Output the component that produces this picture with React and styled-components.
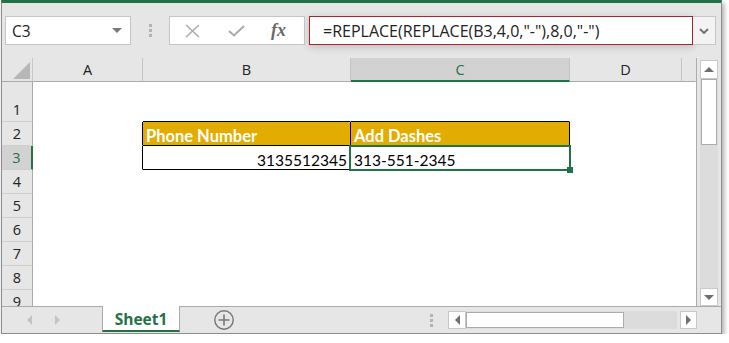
import React from 'react'
import styled, { createGlobalStyle, css } from 'styled-components'

const UI = `"Open Sans", "Noto Sans", sans-serif`
const CELL = `Lato, "Open Sans", sans-serif`
const GREEN = '#217346'

const Global = createGlobalStyle`
  body { margin: 0; background: #fff; }
  * { box-sizing: border-box; }
`

const Window = styled.div`
  width: 721px;
  height: 334px;
  margin-left: 1px;
  border: 1px solid #8d8d8d;
  border-top: 3px solid ${GREEN};
  box-shadow: 2px 3px 5px rgba(0, 0, 0, 0.35);
  background: #e6e6e6;
  display: flex;
  flex-direction: column;
  overflow: hidden;
`

/* formula bar */
const Toolbar = styled.div`
  height: 55px;
  flex: none;
  display: flex;
  align-items: flex-start;
  padding: 13px 0 0 3px;
  font-family: ${UI};
`
const NameBox = styled.div`
  width: 126px;
  height: 29px;
  background: #fff;
  border: 1px solid #c6c6c6;
  display: flex;
  align-items: center;
  justify-content: space-between;
  padding: 0 8px 0 6px;
  font-size: 15.5px;
  color: #222;
`
const Grip = styled.div`
  width: 3px;
  margin: 8px 17px 0 18px;
  display: flex;
  flex-direction: column;
  gap: 2px;
  span { display: block; width: 3px; height: 3px; background: #b3b3b3; }
`
const FxButtons = styled.div`
  width: 136px;
  height: 29px;
  background: #fff;
  border: 1px solid #c6c6c6;
  display: flex;
  align-items: center;
  padding-left: 15px;
  gap: 28px;
`
const Fx = styled.span`
  font-family: "Liberation Serif", serif;
  font-style: italic;
  font-weight: bold;
  font-size: 18px;
  color: #6a6a6a;
  margin-left: -2px;
`
const FormulaInput = styled.div`
  width: 384px;
  height: 29px;
  margin-left: 4px;
  background: #fff;
  border: 1px solid #a4262c;
  box-shadow: 0 2px 8px rgba(0, 0, 0, 0.18);
  display: flex;
  align-items: center;
  padding-left: 13px;
  font-size: 16px;
  color: #222;
`
const Expand = styled.div`
  width: 23px;
  height: 29px;
  background: #f3f3f3;
  border: 1px solid #c6c6c6;
  border-left: none;
  display: flex;
  align-items: center;
  justify-content: center;
`

/* sheet */
const SheetArea = styled.div`
  height: 248px;
  flex: none;
  display: flex;
`
const Grid = styled.div`
  width: 695px;
  background: #fff;
  border-right: 1px solid #ababab;
  display: flex;
  flex-direction: column;
  overflow: hidden;
`
const Row = styled.div`
  display: flex;
  flex: none;
  height: ${p => p.$h}px;
`
const HeadCell = styled.div`
  width: ${p => p.$w}px;
  flex: ${p => (p.$w ? 'none' : '1')};
  height: 24px;
  background: #e6e6e6;
  border-right: 1px solid ${p => (p.$last ? 'transparent' : '#c4c4c4')};
  border-bottom: 1px solid #ababab;
  display: flex;
  align-items: center;
  justify-content: center;
  font-family: ${UI};
  font-size: 14.5px;
  color: #222;
  ${p => p.$sel && css`
    background: #d2d2d2;
    color: ${GREEN};
    border-bottom: 2px solid ${GREEN};
  `}
`
const Corner = styled(HeadCell)`
  border-right-color: #c8c8c8;
  align-items: flex-end;
  justify-content: flex-end;
  padding: 0 2px 2px 0;
`
const RowHead = styled.div`
  width: 31px;
  flex: none;
  background: #e6e6e6;
  border-right: 1px solid #ababab;
  border-bottom: 1px solid #cfcfcf;
  display: flex;
  align-items: flex-end;
  justify-content: center;
  padding-bottom: 1px;
  font-family: ${UI};
  font-size: 14.5px;
  line-height: 20px;
  color: #222;
  ${p => p.$sel && css`
    background: #d2d2d2;
    color: ${GREEN};
    border-right: 2px solid ${GREEN};
  `}
`
const Cell = styled.div`
  width: ${p => p.$w}px;
  flex: ${p => (p.$w ? 'none' : '1')};
  position: relative;
  border-right: 1px solid ${p => (p.$edge ? '#000' : 'transparent')};
  border-bottom: 1px solid ${p => (p.$under ? '#000' : 'transparent')};
  background: ${p => (p.$fill ? '#e3ac00' : 'transparent')};
  display: flex;
  align-items: flex-end;
  justify-content: ${p => (p.$right ? 'flex-end' : 'flex-start')};
  padding: 0 3px;
  font-family: ${CELL};
  font-size: ${p => (p.$fill ? 16.5 : 15.5)}px;
  line-height: 18px;
  font-weight: ${p => (p.$fill ? 700 : 400)};
  color: ${p => (p.$fill ? '#fff' : '#000')};
  white-space: nowrap;
`
const Selection = styled.div`
  position: absolute;
  left: -2px;
  right: -2px;
  top: -1px;
  bottom: -2px;
  border: 2px solid ${GREEN};
  pointer-events: none;
  &::after {
    content: '';
    position: absolute;
    right: -4px;
    bottom: -4px;
    width: 6px;
    height: 6px;
    background: ${GREEN};
  }
`

const VScrollCol = styled.div`
  width: 24px;
  flex: none;
  padding: 2px 0 0 3px;
`
const VScroll = styled.div`
  width: 18px;
  height: 246px;
  background: #dcdcdc;
  display: flex;
  flex-direction: column;
`
const ScrollBtn = styled.div`
  width: ${p => p.$w || 18}px;
  height: ${p => p.$h || 18}px;
  flex: none;
  background: #fff;
  border: 1px solid #c8c8c8;
  display: flex;
  align-items: center;
  justify-content: center;
`
const VThumb = styled.div`
  height: 66px;
  flex: none;
  background: #fff;
  border: 1px solid #ababab;
  margin: 0 1px;
`
const Spacer = styled.div`
  flex: 1;
`

/* sheet tabs */
const TabBar = styled.div`
  flex: 1;
  border-top: 1px solid #ababab;
  display: flex;
  align-items: center;
`
const TabNav = styled.div`
  width: 100px;
  height: 100%;
  display: flex;
  align-items: center;
  padding-left: 25px;
  gap: 23px;
`
const Tab = styled.div`
  width: 78px;
  height: 26px;
  margin-top: -1px;
  align-self: flex-start;
  background: #fff;
  border-left: 1px solid #ababab;
  border-right: 1px solid #ababab;
  border-bottom: 2px solid ${GREEN};
  display: flex;
  align-items: center;
  justify-content: center;
  padding-top: 1px;
  font-family: ${UI};
  font-weight: 700;
  font-size: 15.5px;
  color: ${GREEN};
`
const AddSheet = styled.div`
  margin-left: 34px;
  width: 20px;
  height: 20px;
  display: flex;
`
const HScroll = styled.div`
  margin-left: 196px;
  display: flex;
  align-items: center;
`
const HGrip = styled.div`
  display: flex;
  flex-direction: column;
  gap: 2px;
  margin-right: 15px;
  span { display: block; width: 3px; height: 3px; background: #b3b3b3; }
`
const HTrack = styled.div`
  display: flex;
  width: 211px;
  height: 18px;
  background: #dcdcdc;
  margin-right: 3px;
`
const HThumb = styled.div`
  width: 158px;
  background: #fff;
  border: 1px solid #ababab;
  margin: 1px 0;
`

const Tri = ({ dir, color = '#6f6f6f' }) => {
  const pts = {
    up: '0,5 5,0 10,5',
    down: '0,0 10,0 5,5',
    left: '5,0 5,10 0,5',
    right: '0,0 0,10 5,5',
  }[dir]
  const vertical = dir === 'up' || dir === 'down'
  return (
    <svg width={vertical ? 10 : 5} height={vertical ? 5 : 10} viewBox={vertical ? '0 0 10 5' : '0 0 5 10'}>
      <polygon points={pts} fill={color} />
    </svg>
  )
}

const cols = [
  { key: 'A', w: 110 },
  { key: 'B', w: 208 },
  { key: 'C', w: 219 },
  { key: 'D', w: 112 },
]

const rows = [
  { n: 1, h: 40 },
  { n: 2, h: 24, cells: { B: 'Phone Number', C: 'Add Dashes' }, head: true },
  { n: 3, h: 24, cells: { B: '3135512345', C: '313-551-2345' } },
  { n: 4, h: 24 },
  { n: 5, h: 24 },
  { n: 6, h: 24 },
  { n: 7, h: 24 },
  { n: 8, h: 24 },
  { n: 9, h: 24 },
]

function SheetRow({ row }) {
  const inTable = row.n === 2 || row.n === 3
  return (
    <Row $h={row.h}>
      <RowHead $sel={row.n === 3}>{row.n}</RowHead>
      {cols.map(c => {
        const tableCol = c.key === 'B' || c.key === 'C'
        return (
          <Cell
            key={c.key}
            $w={c.w}
            $edge={inTable && c.key !== 'D'}
            $under={tableCol && row.n <= 3}
            $fill={row.head && tableCol}
            $right={row.n === 3 && c.key === 'B'}
          >
            {row.cells && row.cells[c.key]}
            {row.n === 3 && c.key === 'C' && <Selection />}
          </Cell>
        )
      })}
      <Cell />
    </Row>
  )
}

export default function App() {
  return (
    <>
      <Global />
      <Window>
        <Toolbar>
          <NameBox>
            <span>C3</span>
            <Tri dir="down" color="#7a7a7a" />
          </NameBox>
          <Grip><span /><span /><span /></Grip>
          <FxButtons>
            <svg width="15" height="14" viewBox="0 0 15 14">
              <path d="M1 1 L14 13 M14 1 L1 13" stroke="#a9a9a9" strokeWidth="1.4" fill="none" />
            </svg>
            <svg width="17" height="12" viewBox="0 0 17 12">
              <path d="M1 6 L6 10.5 L16 1" stroke="#a9a9a9" strokeWidth="2" fill="none" />
            </svg>
            <Fx>fx</Fx>
          </FxButtons>
          <FormulaInput>=REPLACE(REPLACE(B3,4,0,"-"),8,0,"-")</FormulaInput>
          <Expand>
            <svg width="10" height="6" viewBox="0 0 10 6">
              <path d="M1 1 L5 5 L9 1" stroke="#747474" strokeWidth="2" fill="none" />
            </svg>
          </Expand>
        </Toolbar>

        <SheetArea>
          <Grid>
            <Row $h={24}>
              <Corner $w={31}>
                <svg width="17" height="17" viewBox="0 0 17 17">
                  <polygon points="17,0 17,17 0,17" fill="#b7b7b7" />
                </svg>
              </Corner>
              {cols.map(c => (
                <HeadCell key={c.key} $w={c.w} $sel={c.key === 'C'}>{c.key}</HeadCell>
              ))}
              <HeadCell $last />
            </Row>
            {rows.map(r => <SheetRow key={r.n} row={r} />)}
          </Grid>
          <VScrollCol>
            <VScroll>
              <ScrollBtn $h={19}><Tri dir="up" /></ScrollBtn>
              <VThumb />
              <Spacer />
              <ScrollBtn><Tri dir="down" /></ScrollBtn>
            </VScroll>
          </VScrollCol>
        </SheetArea>

        <TabBar>
          <TabNav>
            <Tri dir="left" color="#c3c3c3" />
            <Tri dir="right" color="#c3c3c3" />
          </TabNav>
          <Tab>Sheet1</Tab>
          <AddSheet>
            <svg width="20" height="20" viewBox="0 0 20 20">
              <circle cx="10" cy="10" r="9.2" stroke="#777" strokeWidth="1.4" fill="none" />
              <path d="M10 4.5 V15.5 M4.5 10 H15.5" stroke="#777" strokeWidth="1.6" />
            </svg>
          </AddSheet>
          <HScroll>
            <HGrip><span /><span /><span /></HGrip>
            <ScrollBtn><Tri dir="left" /></ScrollBtn>
            <HTrack>
              <HThumb />
            </HTrack>
            <ScrollBtn $w={17}><Tri dir="right" /></ScrollBtn>
          </HScroll>
        </TabBar>
      </Window>
    </>
  )
}
